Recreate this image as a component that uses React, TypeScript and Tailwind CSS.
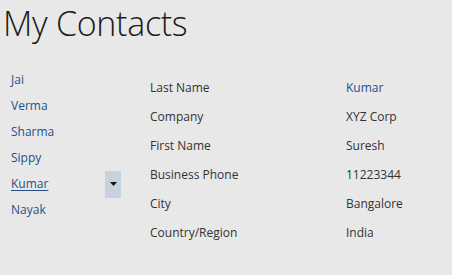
const names = ["Jai", "Verma", "Sharma", "Sippy", "Kumar", "Nayak"];

const fields = [
  { label: "Last Name", value: "Kumar", link: true },
  { label: "Company", value: "XYZ Corp" },
  { label: "First Name", value: "Suresh" },
  { label: "Business Phone", value: "11223344" },
  { label: "City", value: "Bangalore" },
  { label: "Country/Region", value: "India" },
];

export default function App() {
  return (
    <div
      className="w-[452px] h-[275px] bg-[#e8e8e8] overflow-hidden"
      style={{ fontFamily: '"Open Sans", "Noto Sans", sans-serif' }}
    >
      <h1 className="pl-[3px] text-[34px] leading-[47px] font-light text-[#1a1a1a] tracking-[-0.3px] whitespace-nowrap">
        My Contacts
      </h1>
      <div className="flex mt-[20px]">
        {/* contact list */}
        <ul className="w-[150px] pl-[11px]">
          {names.map((n) => (
            <li key={n} className="flex items-center h-[26px] text-[12px] text-[#1f4f8c]">
              <span className={n === "Kumar" ? "w-[94px] underline underline-offset-2" : "w-[94px]"}>
                {n}
              </span>
              {n === "Kumar" && (
                <span className="flex items-center justify-center w-[16px] h-[27px] bg-[#c6d2dd]">
                  <svg width="7" height="4" viewBox="0 0 7 4">
                    <path d="M0 0h7L3.5 4z" fill="#111" />
                  </svg>
                </span>
              )}
            </li>
          ))}
        </ul>
        {/* details */}
        <div className="grid grid-cols-[196px_auto] auto-rows-[29px] items-center mt-[6px] text-[12px] text-[#333]">
          {fields.map((f) => (
            <>
              <span key={f.label}>{f.label}</span>
              <span key={f.label + "v"} className={f.link ? "text-[#1f4f8c]" : ""}>
                {f.value}
              </span>
            </>
          ))}
        </div>
      </div>
    </div>
  );
}
